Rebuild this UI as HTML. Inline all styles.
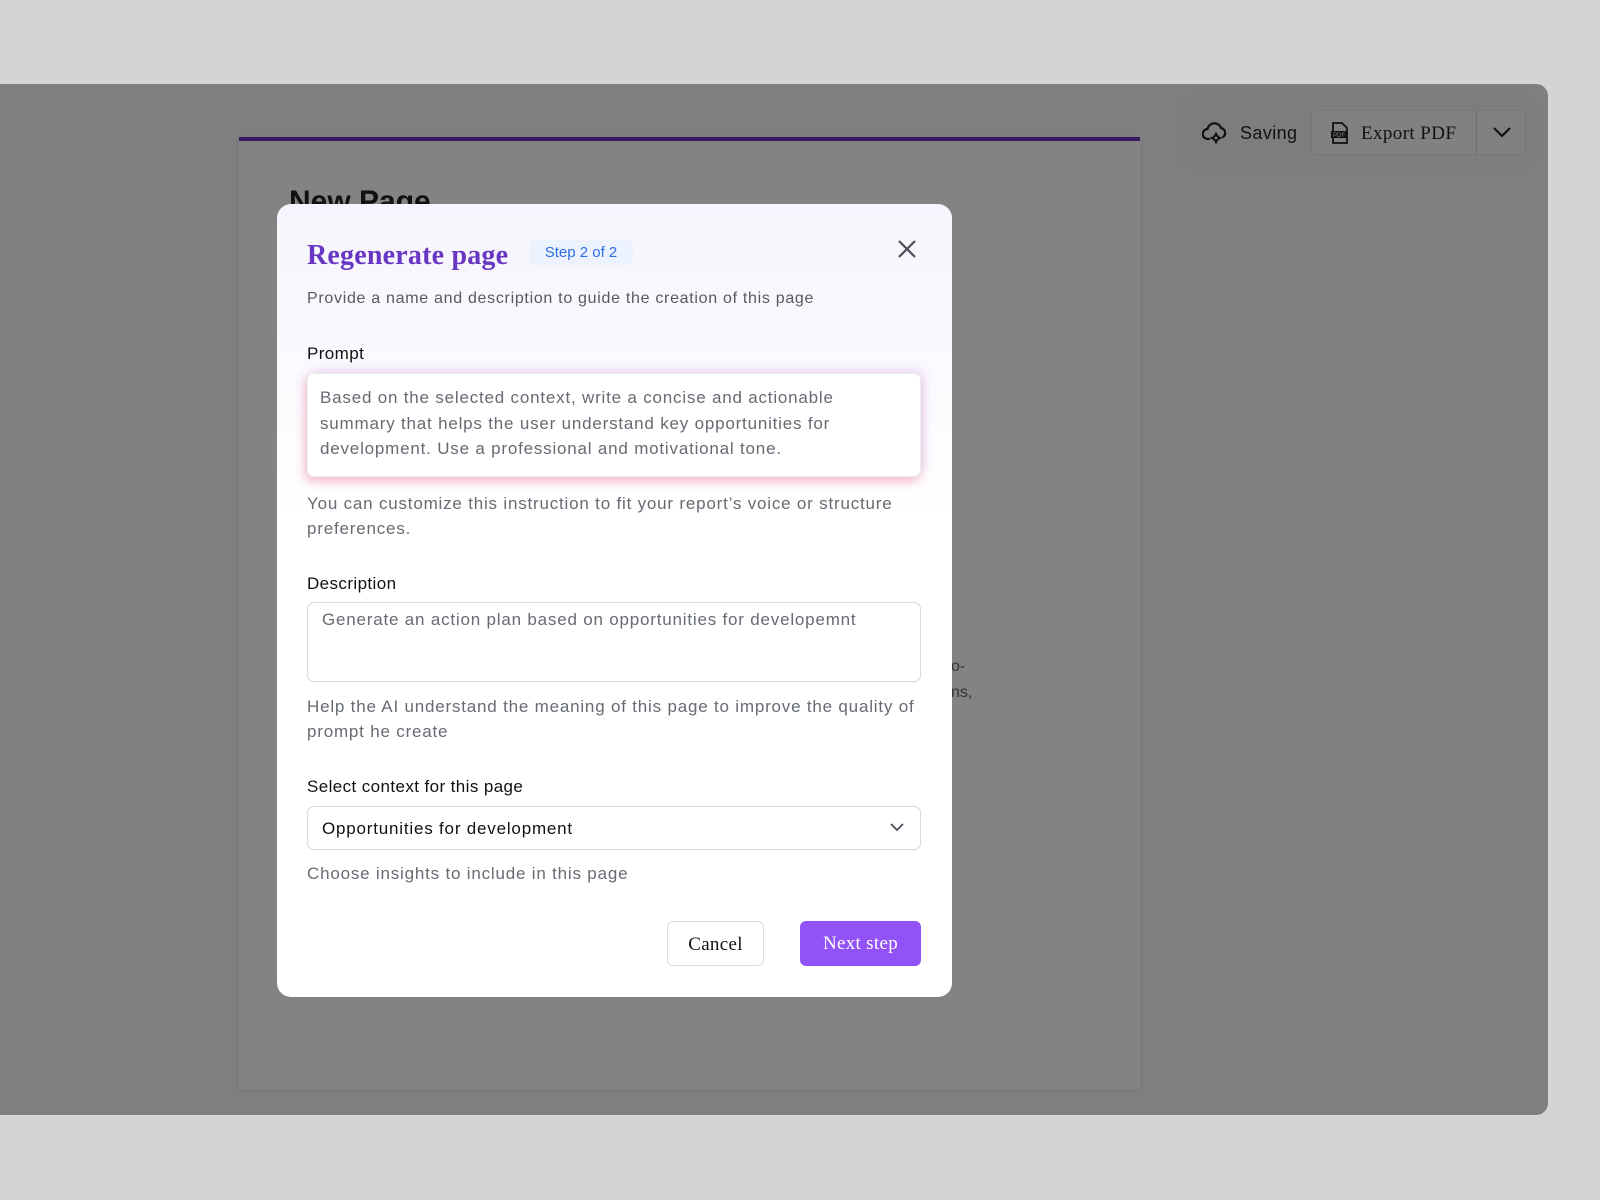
<!DOCTYPE html>
<html><head><meta charset="utf-8"><style>
*{box-sizing:border-box;margin:0;padding:0}
body{width:1600px;height:1200px;background:#d4d4d4;position:relative;overflow:hidden;font-family:"Liberation Sans",sans-serif}
.ov{position:absolute;left:0;top:84px;width:1548px;height:1031px;background:#7f7f7f;border-radius:0 12px 12px 0}
.doc{position:absolute;left:239px;top:137px;width:901px;height:952px;background:#838383;border-top:4px solid #3a1860;box-shadow:0 2px 6px rgba(0,0,0,.08)}
.doc h1{position:absolute;left:50px;top:44px;font-size:30px;font-weight:700;color:#111}
.bt{position:absolute;left:951px;font-size:16px;color:#333}
.tb{position:absolute;left:1182px;top:99px;width:355px;height:66px;border-radius:14px;background:#7d7d7d;box-shadow:0 0 8px rgba(0,0,0,.04)}
.exp{position:absolute;left:1311px;top:110px;width:215px;height:45px;border:1px solid #767676;border-radius:6px;background:#818181}
.exp .div{position:absolute;left:164px;top:0;bottom:0;border-left:1px solid #6e6e6e}
.modal{position:absolute;left:277px;top:204px;width:675px;height:793px;border-radius:14px;background:linear-gradient(180deg,#f7f4fd 0,#fcfbfe 200px,#fff 320px);}
.t{position:absolute;left:30px;top:36px;font-family:"Liberation Serif",serif;font-weight:700;font-size:28px;color:#6737c4;letter-spacing:0.2px}
.badge{position:absolute;left:252px;top:36px;width:104px;height:25px;border-radius:5px;background:#edf3fe;color:#2e6ee6;font-size:15px;text-align:center;line-height:25px}
.sub{position:absolute;left:30px;font-size:16px;color:#555a63;letter-spacing:0.7px}
.lab{position:absolute;left:30px;font-size:17px;color:#111;letter-spacing:0.4px}
.help{position:absolute;left:30px;width:620px;font-size:17px;color:#676b73;line-height:25px;letter-spacing:0.8px}
.box{position:absolute;left:30px;width:614px;background:#fff;border:1px solid #d9d9de;border-radius:7px;letter-spacing:0.8px}
.btn{position:absolute;top:717px;height:45px;border-radius:6px;font-family:"Liberation Serif",serif;font-size:19px;text-align:center;line-height:46px;letter-spacing:0.3px}
</style></head><body>
<div class="ov"></div>
<div class="doc"><h1>New Page</h1></div>
<div class="bt" style="top:658px">o-</div>
<div class="bt" style="top:684px">ns,</div>
<div class="tb"></div>
<svg style="position:absolute;left:1202px;top:121px" width="26" height="24" viewBox="0 0 26 24" fill="none" stroke="#111" stroke-width="2.2" stroke-linecap="round"><path d="M7 18H6a5 5 0 0 1-.5-10A7 7 0 0 1 19 7a5 5 0 0 1 2 9"/><circle cx="14" cy="17" r="2.5"/><path d="M14 12.5v1.5M14 20v1.5M9.5 17H11M17 17h1.5"/></svg>
<div style="position:absolute;left:1240px;top:123px;font-size:18px;color:#111;letter-spacing:0.4px">Saving</div>
<div class="exp"><div class="div"></div></div>
<svg style="position:absolute;left:1330px;top:122px" width="20" height="22" viewBox="0 0 20 22"><path d="M3 1h9l5 5v15H3z" fill="none" stroke="#111" stroke-width="1.8"/><rect x="1" y="9" width="16" height="7" fill="#111"/><text x="9" y="15" font-size="6" fill="#888" text-anchor="middle" font-family="Liberation Sans">PDF</text></svg>
<div style="position:absolute;left:1361px;top:123px;font-family:'Liberation Serif',serif;font-size:19px;color:#111;letter-spacing:0.4px">Export PDF</div>
<svg style="position:absolute;left:1492px;top:126px" width="20" height="12" viewBox="0 0 20 12" fill="none" stroke="#111" stroke-width="2.2"><path d="M2 2l8 8 8-8"/></svg>

<div class="modal">
<div class="t">Regenerate page</div>
<div class="badge">Step 2 of 2</div>
<svg style="position:absolute;left:620px;top:35px" width="20" height="20" viewBox="0 0 20 20" stroke="#4b4f58" stroke-width="2.2"><path d="M2 2l16 16M18 2L2 18"/></svg>
<div class="sub" style="top:86px">Provide a name and description to guide the creation of this page</div>
<div class="lab" style="top:140px">Prompt</div>
<div class="box" style="top:169px;height:104px;border-color:#eee;box-shadow:-3px 4px 10px rgba(230,120,170,.35),3px -3px 10px rgba(200,150,240,.3),0 6px 10px rgba(255,170,150,.25);padding:11px 12px;font-size:17px;color:#666a72;line-height:25.5px">Based on the selected context, write a concise and actionable summary that helps the user understand key opportunities for development. Use a professional and motivational tone.</div>
<div class="help" style="top:287px">You can customize this instruction to fit your report’s voice or structure preferences.</div>
<div class="lab" style="top:370px">Description</div>
<div class="box" style="top:398px;height:80px;padding:7px 14px;font-size:17px;color:#666a72">Generate an action plan based on opportunities for developemnt</div>
<div class="help" style="top:490px">Help the AI understand the meaning of this page to improve the quality of prompt he create</div>
<div class="lab" style="top:573px">Select context for this page</div>
<div class="box" style="top:602px;height:44px;padding:0 14px;font-size:17px;color:#111;line-height:44px">Opportunities for development
<svg style="position:absolute;right:16px;top:16px" width="14" height="9" viewBox="0 0 14 9" fill="none" stroke="#4b4f58" stroke-width="1.8"><path d="M1 1l6 6 6-6"/></svg></div>
<div class="help" style="top:657px">Choose insights to include in this page</div>
<div class="btn" style="left:390px;width:97px;background:#fff;border:1px solid #ddd;color:#111">Cancel</div>
<div class="btn" style="left:523px;width:121px;background:#9152f7;color:#fff">Next step</div>
</div>
</body></html>
